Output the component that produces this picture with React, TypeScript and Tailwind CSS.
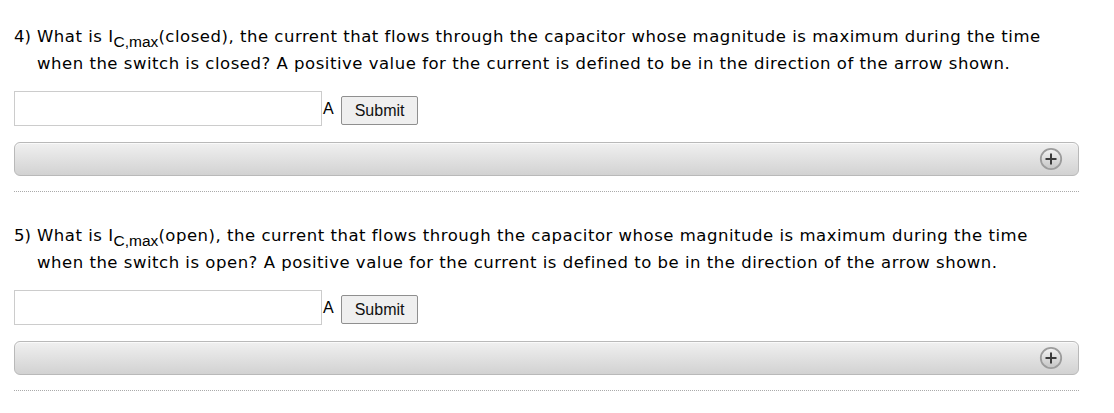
import React from "react";

type Question = {
  num: string;
  label: string;
  line1: string;
  line2: string;
};

const questions: Question[] = [
  {
    num: "4)",
    label: "(closed)",
    line1: ", the current that flows through the capacitor whose magnitude is maximum during the time",
    line2: "when the switch is closed? A positive value for the current is defined to be in the direction of the arrow shown.",
  },
  {
    num: "5)",
    label: "(open)",
    line1: ", the current that flows through the capacitor whose magnitude is maximum during the time",
    line2: "when the switch is open? A positive value for the current is defined to be in the direction of the arrow shown.",
  },
];

function PlusIcon() {
  return (
    <svg width="24" height="24" viewBox="0 0 24 24">
      <defs>
        <linearGradient id="pg" x1="0" y1="0" x2="0" y2="1">
          <stop offset="0" stopColor="#f4f4f4" />
          <stop offset="1" stopColor="#c4c4c4" />
        </linearGradient>
      </defs>
      <circle cx="12" cy="12" r="10.2" fill="url(#pg)" stroke="#9c9c9c" strokeWidth="1.8" />
      <path d="M12 6.5v11M6.5 12h11" stroke="#3c3c3c" strokeWidth="2" />
    </svg>
  );
}

function QuestionBlock({ q, top }: { q: Question; top: string }) {
  return (
    <section className={top}>
      <div
        className="flex text-[16.5px] tracking-[0.52px] leading-[26.5px] text-black"
        style={{ fontFamily: '"DejaVu Sans", sans-serif' }}
      >
        <span className="w-[23px] shrink-0 tracking-normal">{q.num}</span>
        <div>
          <div>
            What is I
            <sub
              className="text-[15.5px] tracking-normal relative top-[5px] align-baseline"
              style={{ fontFamily: '"Liberation Sans", Arial, sans-serif' }}
            >
              C,max
            </sub>
            {q.label}
            {q.line1}
          </div>
          <div>{q.line2}</div>
        </div>
      </div>
      <div className="mt-[14px] flex items-center" style={{ fontFamily: '"Liberation Sans", Arial, sans-serif' }}>
        <input type="text" className="w-[308px] h-[35px] border border-[#cccccc] bg-white outline-none" />
        <span className="text-[16px] text-black ml-[1px]">A</span>
        <button
          className="ml-[7px] mt-[4px] h-[29px] px-[13px] text-[16px] text-[#111] border border-[#8f8f8f] rounded-[2px] bg-[#efefef]"
          style={{ fontFamily: '"Liberation Sans", Arial, sans-serif' }}
        >
          Submit
        </button>
      </div>
      <div className="mt-[16px] h-[34px] rounded-[6px] border border-[#b9b9b9] bg-linear-to-b from-[#f0f0f0] to-[#d2d2d2] flex items-center justify-end pr-[15px] shadow-[inset_0_1px_0_#fafafa]">
        <PlusIcon />
      </div>
      <div className="mt-[15px] border-t border-dotted border-[#aaaaaa]" />
    </section>
  );
}

export default function App() {
  return (
    <div className="w-[1114px] h-[413px] bg-white pl-[14px] pr-[35px] overflow-hidden">
      <QuestionBlock q={questions[0]} top="pt-[24px]" />
      <QuestionBlock q={questions[1]} top="pt-[31px]" />
    </div>
  );
}
